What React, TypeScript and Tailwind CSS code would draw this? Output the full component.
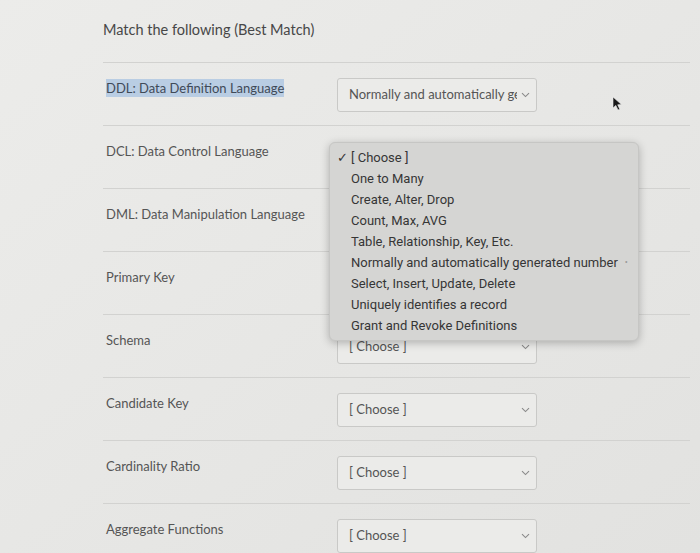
import React from "react";

const rows = [
  { label: "DDL: Data Definition Language", value: "Normally and automatically generated number", highlight: true },
  { label: "DCL: Data Control Language", value: "[ Choose ]", hidden: true },
  { label: "DML: Data Manipulation Language", value: "[ Choose ]", hidden: true },
  { label: "Primary Key", value: "[ Choose ]", hidden: true },
  { label: "Schema", value: "[ Choose ]" },
  { label: "Candidate Key", value: "[ Choose ]" },
  { label: "Cardinality Ratio", value: "[ Choose ]" },
  { label: "Aggregate Functions", value: "[ Choose ]" },
];

const options = [
  "[ Choose ]",
  "One to Many",
  "Create, Alter, Drop",
  "Count, Max, AVG",
  "Table, Relationship, Key, Etc.",
  "Normally and automatically generated number",
  "Select, Insert, Update, Delete",
  "Uniquely identifies a record",
  "Grant and Revoke Definitions",
];

function Chevron() {
  return (
    <svg width="9" height="6" viewBox="0 0 9 6" className="shrink-0">
      <path d="M1 1.2 L4.5 4.6 L8 1.2" fill="none" stroke="#8a8a8a" strokeWidth="1.1" />
    </svg>
  );
}

export default function App() {
  return (
    <div
      className="relative w-[700px] h-[553px] overflow-hidden bg-gradient-to-br from-[#ececea] via-[#e7e7e5] to-[#e2e2e0]"
      style={{ fontFamily: "Lato, 'Noto Sans', sans-serif" }}
    >
      <div className="ml-[103px] w-[587px]">
        <div className="h-[62px] pt-[20px] text-[14.5px] leading-[20px] text-[#474747]">
          Match the following (Best Match)
        </div>
        {rows.map((r, i) => (
          <div key={i} className="h-[63px] border-t border-[#d2d2d0] flex items-start">
            <div className="w-[234px] pl-[3px] pt-[16px] text-[13px] leading-[18px] text-[#555]">
              {r.highlight ? (
                <span className="bg-[#b9cde3] text-[#3f4a58] py-[1px]">{r.label}</span>
              ) : (
                r.label
              )}
            </div>
            <div
              className={`mt-[15px] w-[200px] h-[34px] border border-[#c9c9c7] rounded-[3px] bg-[#ebebe9] flex items-center pl-[11px] pr-[6px] gap-[4px] ${r.hidden ? "invisible" : ""}`}
            >
              <span className="flex-1 overflow-hidden whitespace-nowrap text-[13px] text-[#555]">{r.value}</span>
              <Chevron />
            </div>
          </div>
        ))}
      </div>

      {/* native dropdown popup */}
      <div
        className="absolute left-[329px] top-[142px] w-[310px] h-[199px] rounded-[6px] bg-[#d5d5d3] shadow-[0_2px_8px_rgba(0,0,0,0.25)] border border-[#c6c6c4] py-[4px]"
        style={{ fontFamily: "Roboto, 'Liberation Sans', sans-serif" }}
      >
        {options.map((o, i) => (
          <div key={i} className="relative h-[21px] flex items-center pl-[21px] text-[13px] text-[#363636] whitespace-nowrap">
            {i === 0 && <span className="absolute left-[7px] text-[13px] font-medium">✓</span>}
            {o}
            {i === 5 && <span className="ml-[7px] text-[#999] text-[9px]">•</span>}
          </div>
        ))}
      </div>

      {/* mouse cursor */}
      <svg className="absolute left-[612px] top-[96px]" width="12" height="16" viewBox="0 0 12 16">
        <path d="M1 1 L1 12 L3.8 9.4 L6 14 L7.8 13.2 L5.7 8.8 L9.5 8.6 Z" fill="#1a1a1a" stroke="#eee" strokeWidth="0.6" />
      </svg>
    </div>
  );
}
